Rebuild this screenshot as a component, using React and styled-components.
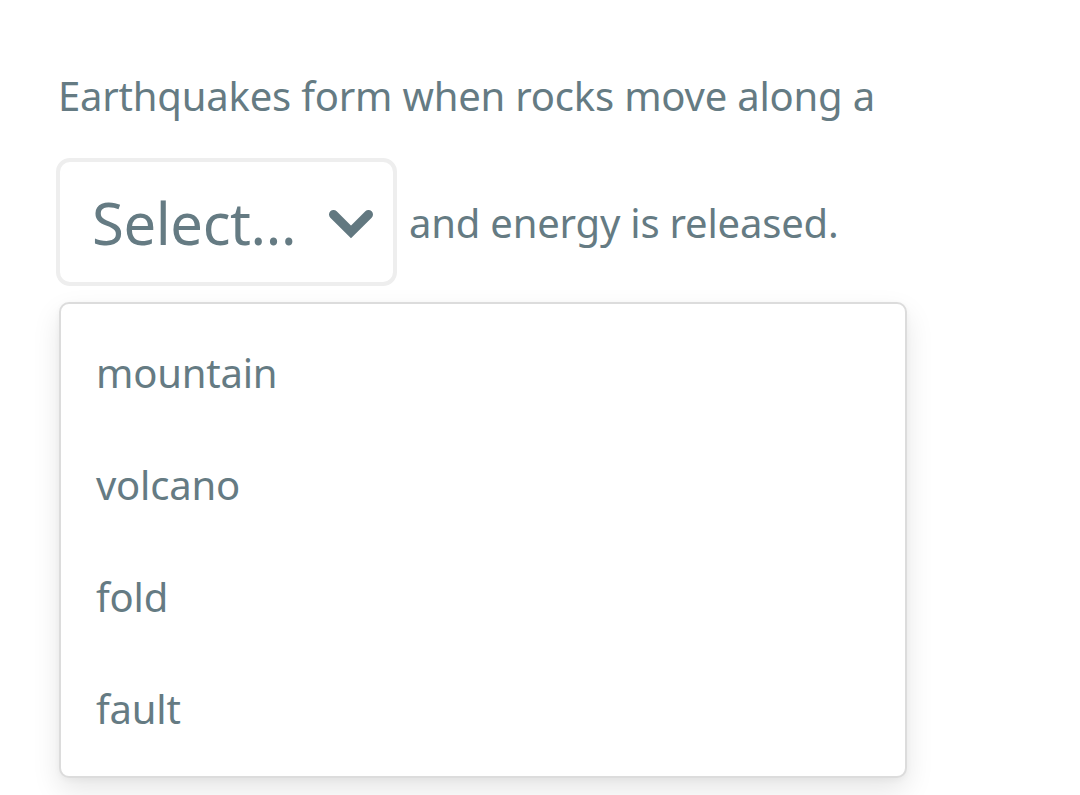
import React from "react";
import styled, { createGlobalStyle } from "styled-components";

const Global = createGlobalStyle`
  html, body { margin: 0; padding: 0; background: #ffffff; min-height: 100vh; }
  body { font-family: "Noto Sans", "Open Sans", sans-serif; font-weight: 400; color: #657b83; }
`;

const Page = styled.div`
  padding: 66px 0 0 56px;
`;

const Line = styled.div`
  font-size: 40px;
  line-height: 60px;
  padding-left: 2px;
  letter-spacing: -0.2px;
`;

const Row = styled.div`
  display: flex;
  align-items: center;
  gap: 12px;
  margin-top: 32px;
`;

const SelectBox = styled.div`
  box-sizing: border-box;
  width: 341px;
  height: 128px;
  border: 4px solid #eeeeee;
  border-radius: 14px;
  display: flex;
  align-items: center;
  justify-content: space-between;
  padding: 0 18px 0 32px;
  font-size: 58px;
  letter-spacing: -0.4px;
`;

const Chevron = styled.svg`
  width: 48px;
  height: 32px;
  flex-shrink: 0;
  margin-top: 4px;
`;

const Tail = styled.span`
  font-size: 40px;
  letter-spacing: -0.2px;
`;

const Menu = styled.ul`
  box-sizing: border-box;
  list-style: none;
  margin: 16px 0 0 3px;
  padding: 12px 0;
  width: 848px;
  height: 476px;
  border: 2px solid #dcdcdc;
  border-radius: 10px;
  box-shadow: 0 12px 28px rgba(0, 0, 0, 0.1), 0 2px 6px rgba(0, 0, 0, 0.04);
  background: #fff;
`;

const Item = styled.li`
  height: 112px;
  display: flex;
  align-items: center;
  padding-left: 35px;
  font-size: 40px;
  letter-spacing: -0.2px;
`;

export default function App() {
  const options = ["mountain", "volcano", "fold", "fault"];
  return (
    <>
      <Global />
      <Page>
        <Line>Earthquakes form when rocks move along a</Line>
        <Row>
          <SelectBox>
            <span>Select...</span>
            <Chevron viewBox="0 0 48 32">
              <path d="M6.5 6.5 L24 24 L41.5 6.5" fill="none" stroke="#627880" strokeWidth="9" strokeLinecap="round" strokeLinejoin="miter" />
            </Chevron>
          </SelectBox>
          <Tail>and energy is released.</Tail>
        </Row>
        <Menu>
          {options.map((o) => (
            <Item key={o}>{o}</Item>
          ))}
        </Menu>
      </Page>
    </>
  );
}
